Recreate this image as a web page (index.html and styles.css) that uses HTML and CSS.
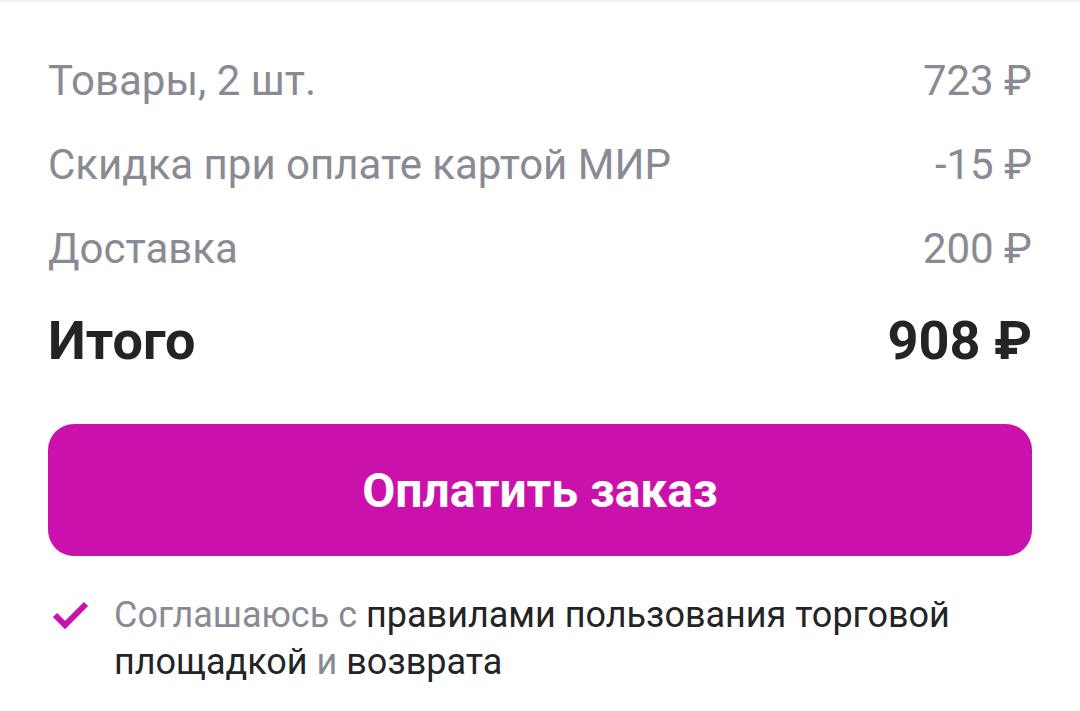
FILE: index.html
```html
<!DOCTYPE html>
<html lang="ru">
<head>
  <meta charset="UTF-8">
  <title>Оформление заказа</title>
  <meta name="viewport" content="width=device-width, initial-scale=1">
  <link rel="stylesheet" href="styles.css">
</head>
<body>
  <div class="summary">
    <div class="row">
      <span>Товары, 2 шт.</span>
      <span>723 ₽</span>
    </div>
    <div class="row">
      <span>Скидка при оплате картой МИР</span>
      <span>-15 ₽</span>
    </div>
    <div class="row">
      <span>Доставка</span>
      <span>200 ₽</span>
    </div>
    <div class="row total">
      <span>Итого</span>
      <span>908 ₽</span>
    </div>

    <button class="pay-btn" type="button">Оплатить заказ</button>

    <div class="agree">
      <svg class="check" width="40" height="32" viewBox="0 0 40 32">
        <path d="M5 15 L15 25 L36 4" fill="none" stroke="#cb11ab" stroke-width="6" stroke-linecap="butt"/>
      </svg>
      <p>Соглашаюсь с <a href="#">правилами пользования торговой площадкой</a> и <a href="#">возврата</a></p>
    </div>
  </div>
</body>
</html>
```

FILE: styles.css
```css
html, body {
  margin: 0;
  padding: 0;
}
body {
  background: #fff;
  border-top: 2px solid #f1f1f3;
  font-family: Roboto, 'Noto Sans', sans-serif;
  color: #242424;
}
.summary {
  padding: 36px 48px 0 48px;
}
.row {
  display: flex;
  justify-content: space-between;
  align-items: center;
  height: 84px;
  font-size: 42px;
  color: #8a8a94;
}
.row.total {
  margin-top: 8px;
  font-size: 54px;
  font-weight: 700;
  color: #242424;
}
.pay-btn {
  display: block;
  width: 100%;
  height: 132px;
  margin-top: 42px;
  border: none;
  border-radius: 26px;
  background: #cb11ab;
  color: #fff;
  font-family: inherit;
  font-size: 48px;
  font-weight: 700;
  cursor: pointer;
}
.agree {
  display: flex;
  align-items: flex-start;
  gap: 24px;
  margin-top: 36px;
}
.check {
  flex: none;
  margin: 8px 0 0 2px;
}
.agree p {
  margin: 0;
  font-size: 36px;
  line-height: 47px;
  color: #8a8a94;
}
.agree a {
  color: #242424;
  text-decoration: none;
}
```
